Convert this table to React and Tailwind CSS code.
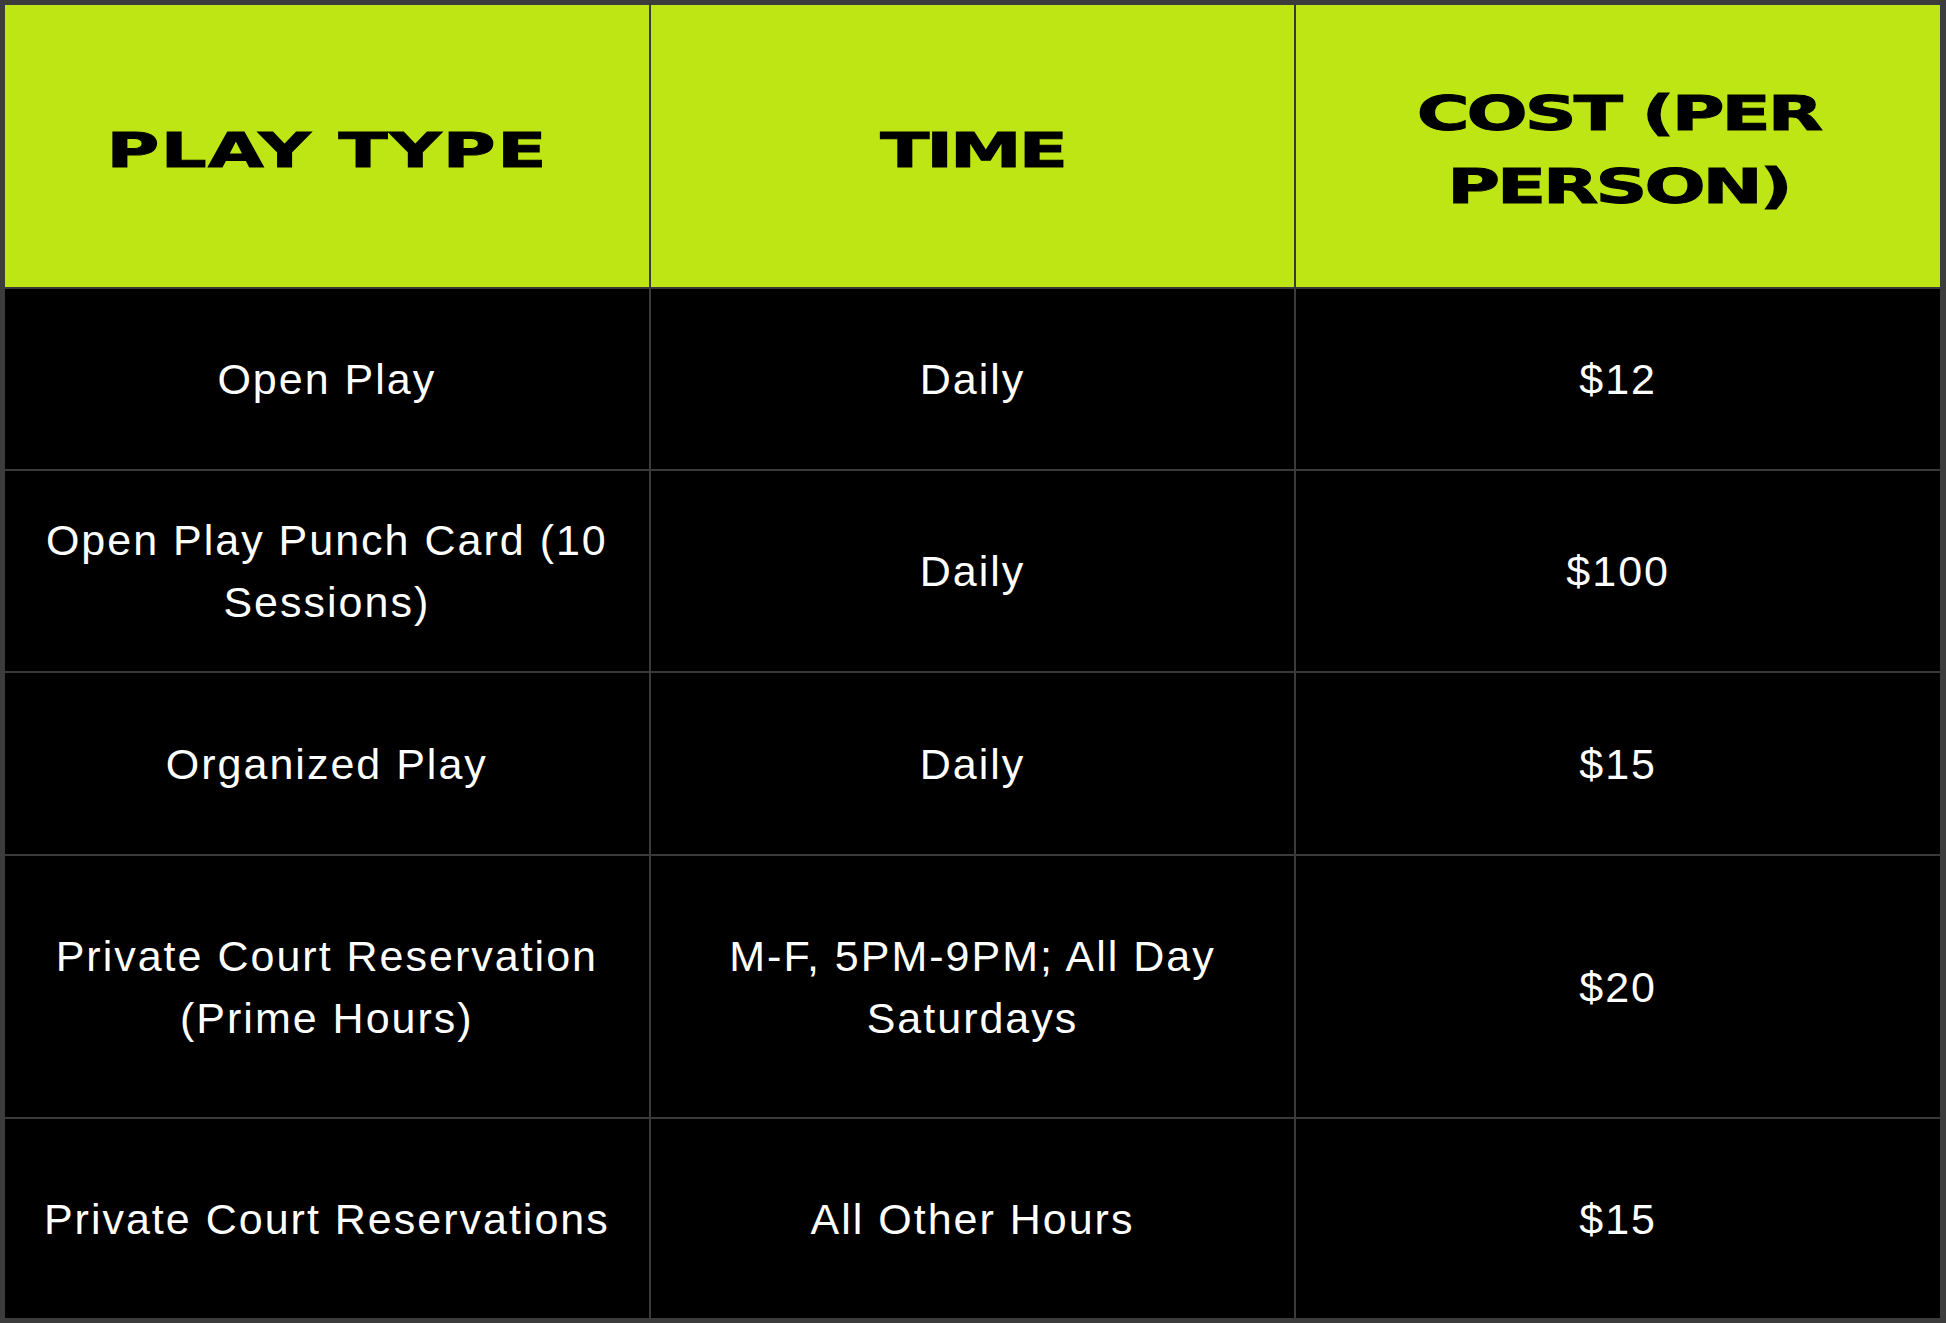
import React from "react";

const rows = [
  [["Open Play"], ["Daily"], ["$12"]],
  [["Open Play Punch Card (10", "Sessions)"], ["Daily"], ["$100"]],
  [["Organized Play"], ["Daily"], ["$15"]],
  [["Private Court Reservation", "(Prime Hours)"], ["M-F, 5PM-9PM; All Day", "Saturdays"], ["$20"]],
  [["Private Court Reservations"], ["All Other Hours"], ["$15"]],
];

function Header({ lines, tight }) {
  return (
    <div className="bg-[#bee615] flex items-center justify-center pt-[8px] text-black">
      <div
        className={
          "text-center font-['DejaVu_Sans',sans-serif] font-bold text-[48px] leading-[73px] scale-x-[1.5] whitespace-nowrap [-webkit-text-stroke:1px_black] " +
          (tight ? "tracking-[-2px]" : "tracking-[1px]")
        }
      >
        {lines.map((l, i) => (
          <div key={i}>{l}</div>
        ))}
      </div>
    </div>
  );
}

function Cell({ lines }) {
  return (
    <div className="bg-black flex items-center justify-center text-white">
      <div className="text-center font-['Liberation_Sans',Arial,sans-serif] text-[43px] leading-[62px] tracking-[2px] whitespace-nowrap">
        {lines.map((l, i) => (
          <div key={i}>{l}</div>
        ))}
      </div>
    </div>
  );
}

export default function App() {
  return (
    <div className="w-[1946px] h-[1323px] bg-[#3c3c3c] pt-[5px] pb-[5px] pl-[5px] pr-[6px]">
      <div className="grid grid-cols-3 grid-rows-[282px_180px_200px_181px_261px_199px] gap-[2px] bg-[#3a3a3a] h-full">
        <Header lines={["PLAY TYPE"]} />
        <Header lines={["TIME"]} tight />
        <Header lines={["COST (PER", "PERSON)"]} tight />
        {rows.map((r, i) => (
          <React.Fragment key={i}>
            {r.map((c, j) => (
              <Cell key={j} lines={c} />
            ))}
          </React.Fragment>
        ))}
      </div>
    </div>
  );
}
